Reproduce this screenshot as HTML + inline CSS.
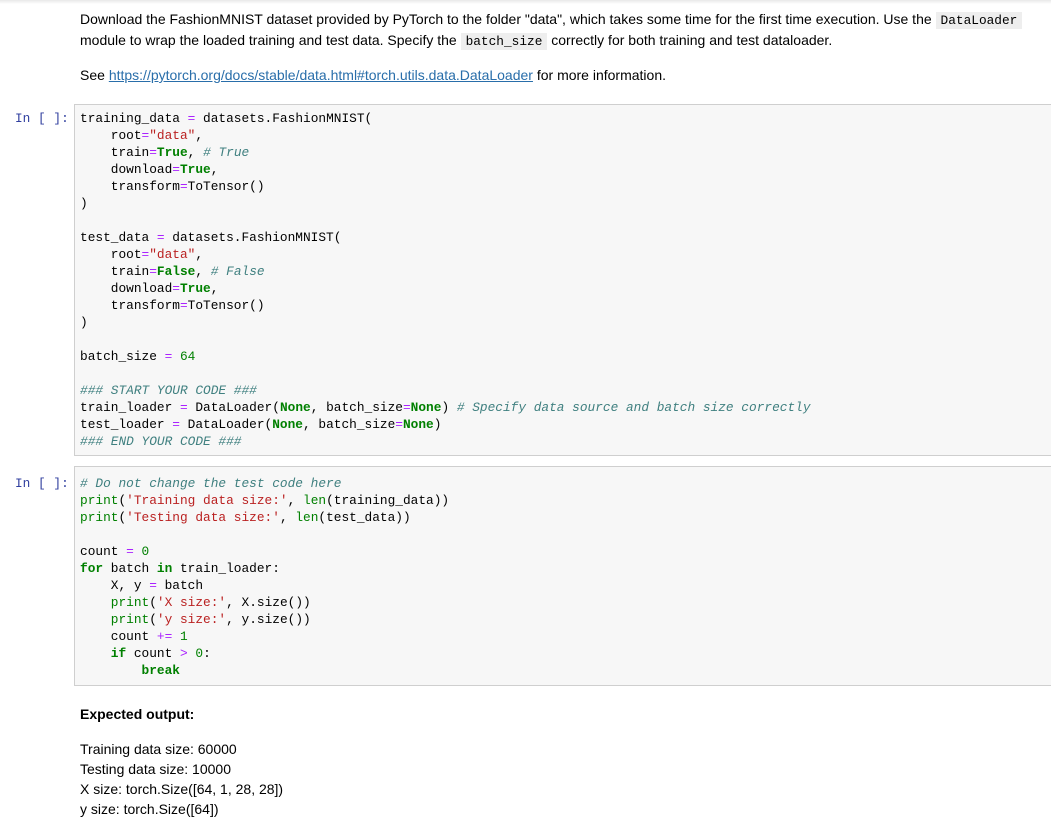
<!DOCTYPE html>
<html><head><meta charset="utf-8"><style>
html,body{margin:0;padding:0;background:#fff;width:1051px;height:831px;overflow:hidden}
body{font-family:"Liberation Sans",Arial,sans-serif;font-size:14px;color:#000;position:relative}
.t{position:absolute;left:80px;white-space:nowrap;line-height:20px}
code.i{font-family:"Liberation Mono",monospace;font-size:12.8px;background:#eee;padding:1px 5px}
a{color:#296eaa;text-decoration:underline}
.cell{position:absolute;left:74px;width:977px;background:#f7f7f7;border:1px solid #cfcfcf;border-right:none;box-sizing:border-box}
pre{margin:0;padding:5px 0 0 5px;font-family:"Liberation Mono",monospace;font-size:12.82px;line-height:17px;color:#000}
.p{position:absolute;left:15px;font-family:"Liberation Mono",monospace;font-size:12.8px;color:#303f9f;line-height:17px}
.k{color:#008000;font-weight:bold}.b{color:#008000}.s{color:#ba2121}.c{color:#408080;font-style:italic}.o{color:#aa22ff}.n{color:#008000}
</style></head><body>
<div style="position:absolute;left:0;top:0;width:1051px;height:4px;background:linear-gradient(#e8e8e8,#fff)"></div>
<div class="t" style="top:9px">Download the FashionMNIST dataset provided by PyTorch to the folder "data", which takes some time for the first time execution. Use the <code class="i">DataLoader</code></div>
<div class="t" style="top:30px">module to wrap the loaded training and test data. Specify the <code class="i">batch_size</code> correctly for both training and test dataloader.</div>
<div class="t" style="top:65px">See <a>https://pytorch.org/docs/stable/data.html#torch.utils.data.DataLoader</a> for more information.</div>

<div class="p" style="top:110px">In [ ]:</div>
<div class="cell" style="top:104px;height:352px"><pre>training_data <span class="o">=</span> datasets.FashionMNIST(
    root<span class="o">=</span><span class="s">"data"</span>,
    train<span class="o">=</span><span class="k">True</span>, <span class="c"># True</span>
    download<span class="o">=</span><span class="k">True</span>,
    transform<span class="o">=</span>ToTensor()
)

test_data <span class="o">=</span> datasets.FashionMNIST(
    root<span class="o">=</span><span class="s">"data"</span>,
    train<span class="o">=</span><span class="k">False</span>, <span class="c"># False</span>
    download<span class="o">=</span><span class="k">True</span>,
    transform<span class="o">=</span>ToTensor()
)

batch_size <span class="o">=</span> <span class="n">64</span>

<span class="c">### START YOUR CODE ###</span>
train_loader <span class="o">=</span> DataLoader(<span class="k">None</span>, batch_size<span class="o">=</span><span class="k">None</span>) <span class="c"># Specify data source and batch size correctly</span>
test_loader <span class="o">=</span> DataLoader(<span class="k">None</span>, batch_size<span class="o">=</span><span class="k">None</span>)
<span class="c">### END YOUR CODE ###</span></pre></div>

<div class="p" style="top:475px">In [ ]:</div>
<div class="cell" style="top:466px;height:220px"><pre style="padding-top:8px"><span class="c"># Do not change the test code here</span>
<span class="b">print</span>(<span class="s">'Training data size:'</span>, <span class="b">len</span>(training_data))
<span class="b">print</span>(<span class="s">'Testing data size:'</span>, <span class="b">len</span>(test_data))

count <span class="o">=</span> <span class="n">0</span>
<span class="k">for</span> batch <span class="k">in</span> train_loader:
    X, y <span class="o">=</span> batch
    <span class="b">print</span>(<span class="s">'X size:'</span>, X.size())
    <span class="b">print</span>(<span class="s">'y size:'</span>, y.size())
    count <span class="o">+=</span> <span class="n">1</span>
    <span class="k">if</span> count <span class="o">&gt;</span> <span class="n">0</span>:
        <span class="k">break</span></pre></div>

<div class="t" style="top:704px;font-weight:bold">Expected output:</div>
<div class="t" style="top:739px">Training data size: 60000</div>
<div class="t" style="top:759px">Testing data size: 10000</div>
<div class="t" style="top:779px">X size: torch.Size([64, 1, 28, 28])</div>
<div class="t" style="top:799px">y size: torch.Size([64])</div>
</body></html>
